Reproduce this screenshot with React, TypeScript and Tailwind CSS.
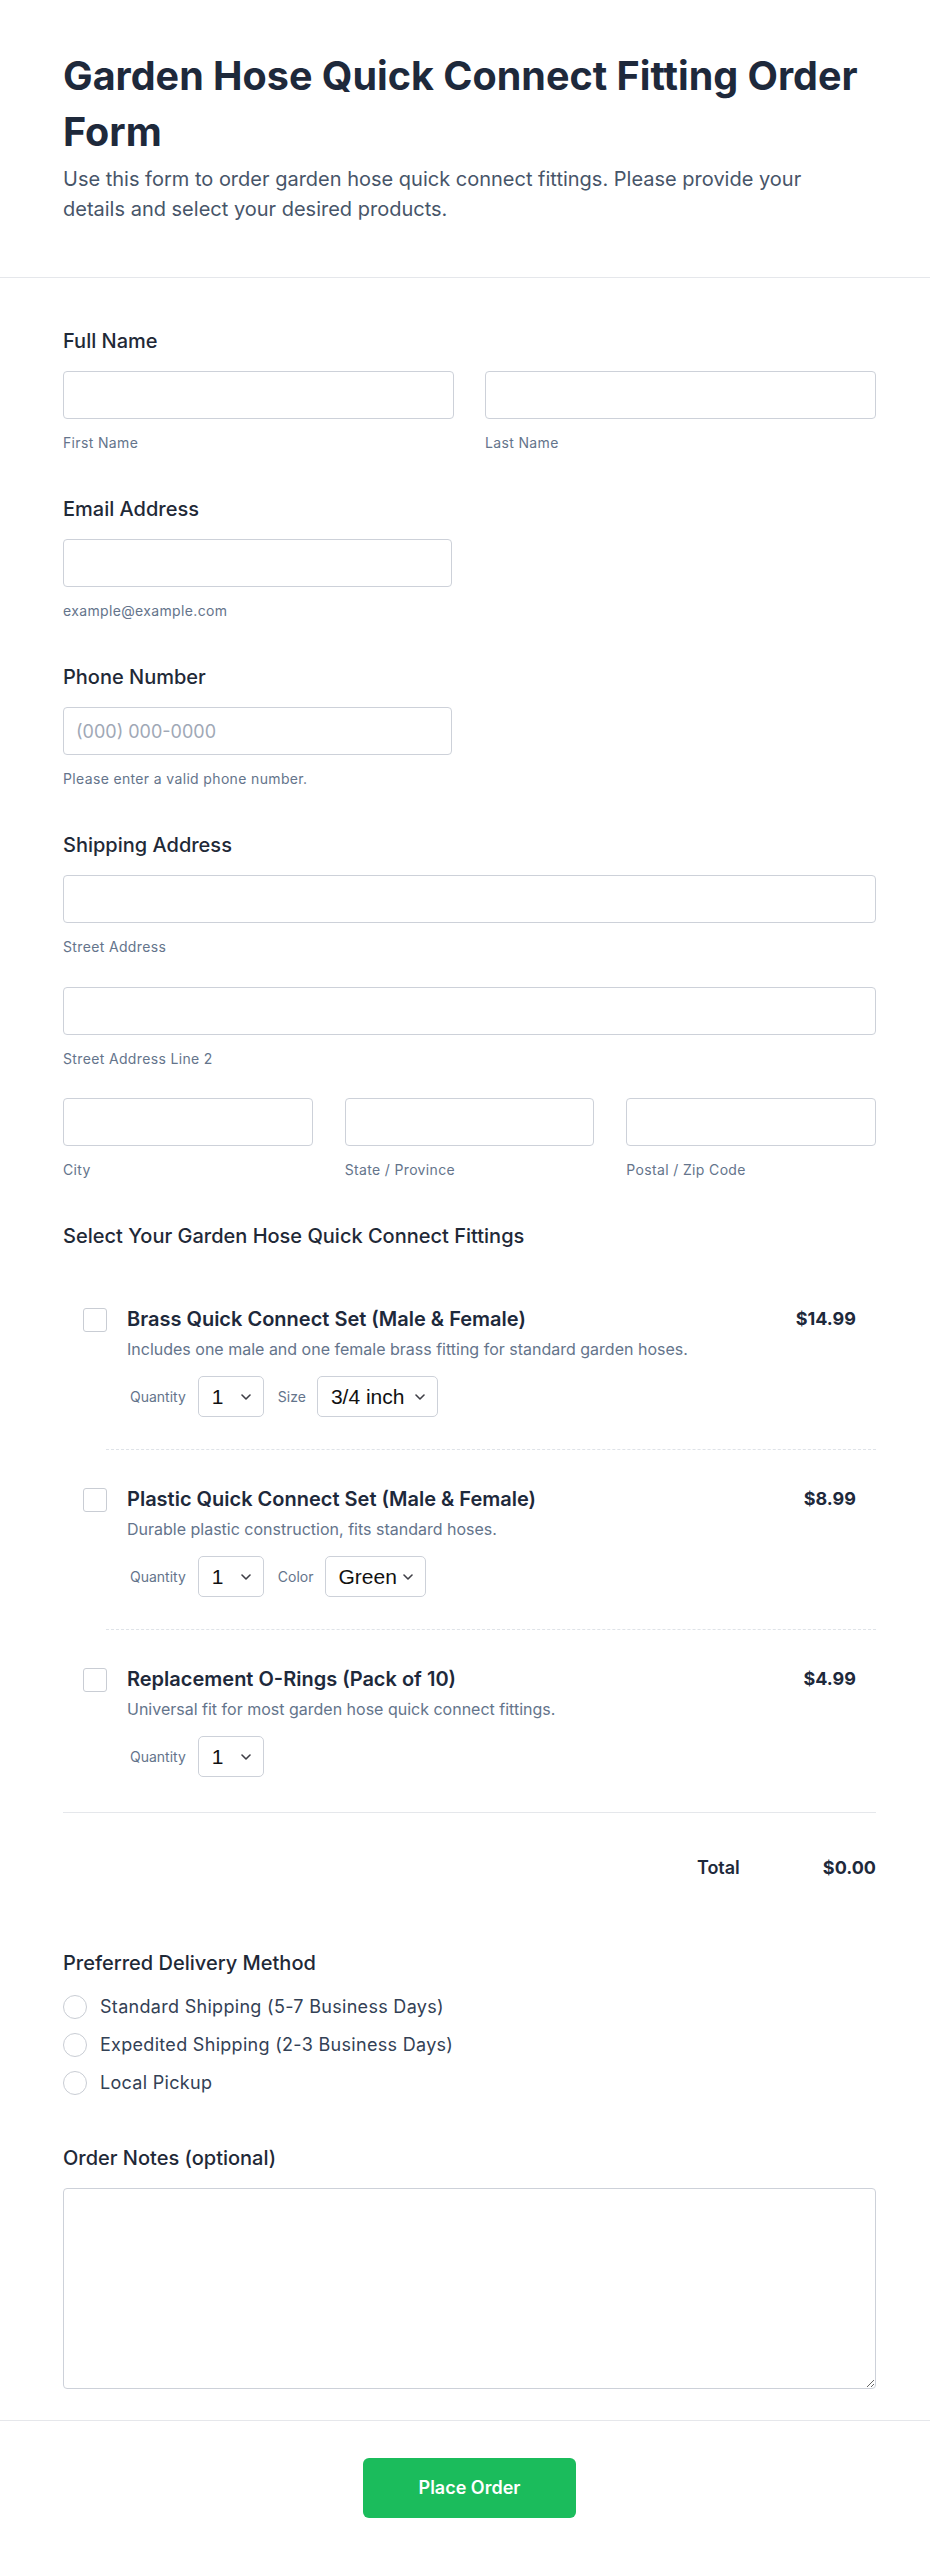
import React from 'react';

const inputCls = 'block h-12 w-full rounded border border-[#cdd1d9] bg-white px-3 text-lg text-[#1e293b] outline-none';

const Helper = ({ children }: { children: React.ReactNode }) => (
  <p className="mt-[14px] text-sm leading-5 tracking-wide text-[#64748b]">{children}</p>
);

const Label = ({ children }: { children: React.ReactNode }) => (
  <p className="mb-4 text-xl font-medium leading-7 text-[#1f2937]">{children}</p>
);

const Chevron = () => (
  <svg width="10" height="6" viewBox="0 0 10 6" fill="none" className="shrink-0">
    <path d="M1 1l4 4 4-4" stroke="#3f3f46" strokeWidth="1.6" strokeLinecap="round" strokeLinejoin="round" />
  </svg>
);

const FakeSelect = ({ value, width }: { value: string; width: string }) => (
  <div className={`flex h-[41px] items-center justify-between rounded-[5px] border border-[#cdd1d9] bg-white pl-[13px] pr-[12px] ${width}`}>
    <span className="font-['Liberation_Sans',Arial,sans-serif] text-[21px] leading-none text-[#111]">{value}</span>
    <Chevron />
  </div>
);

type Product = {
  name: string;
  desc: string;
  price: string;
  extra?: { label: string; value: string; width: string };
};

const products: Product[] = [
  {
    name: 'Brass Quick Connect Set (Male & Female)',
    desc: 'Includes one male and one female brass fitting for standard garden hoses.',
    price: '$14.99',
    extra: { label: 'Size', value: '3/4 inch', width: 'w-[121px]' },
  },
  {
    name: 'Plastic Quick Connect Set (Male & Female)',
    desc: 'Durable plastic construction, fits standard hoses.',
    price: '$8.99',
    extra: { label: 'Color', value: 'Green', width: 'w-[101px]' },
  },
  {
    name: 'Replacement O-Rings (Pack of 10)',
    desc: 'Universal fit for most garden hose quick connect fittings.',
    price: '$4.99',
  },
];

const ProductRow = ({ p, last }: { p: Product; last: boolean }) => (
  <>
    <div className={`flex items-start gap-5 px-5 pt-[35px] ${last ? 'pb-[35px]' : 'pb-[32px]'}`}>
      <span className="mt-[3px] block size-6 shrink-0 rounded-[3px] border border-[#c9cdd4] bg-white" />
      <div className="flex-1">
        <div className="flex items-start justify-between">
          <p className="text-xl font-semibold leading-7 text-[#1e293b]">{p.name}</p>
          <p className="text-lg font-bold leading-7 text-[#1e293b]">{p.price}</p>
        </div>
        <p className="mt-1 text-base leading-6 text-[#64748b]">{p.desc}</p>
        <div className="mt-[15px] flex items-center gap-[14px]">
          <div className="flex items-center gap-3">
            <span className="pl-[3px] text-sm text-[#64748b]">Quantity</span>
            <FakeSelect value="1" width="w-[66px]" />
          </div>
          {p.extra && (
            <div className="flex items-center gap-[11px]">
              <span className="text-sm text-[#64748b]">{p.extra.label}</span>
              <FakeSelect value={p.extra.value} width={p.extra.width} />
            </div>
          )}
        </div>
      </div>
    </div>
    {!last && <div className="ml-[43px] border-t border-dashed border-[#dfe3e8]" />}
  </>
);

const Radio = ({ label }: { label: string }) => (
  <label className="flex h-7 items-center gap-[13px]">
    <span className="block size-6 shrink-0 rounded-full border border-[#c9cdd4] bg-white" />
    <span className="text-lg leading-7 tracking-[0.3px] text-[#334155]">{label}</span>
  </label>
);

export default function App() {
  return (
    <div className="min-h-screen bg-white font-['Inter','Liberation_Sans',sans-serif]">
      <header className="border-b border-[#e5e7eb] pb-[53px] pl-[63px] pr-[54px] pt-12">
        <h1 className="text-[39.5px] font-bold leading-[56px] text-[#1e293b]">
          Garden Hose Quick Connect Fitting Order Form
        </h1>
        <p className="mt-1 max-w-3xl text-xl leading-[30px] text-[#475569]">
          Use this form to order garden hose quick connect fittings. Please provide your details and select your desired products.
        </p>
      </header>

      <main className="pb-[31px] pl-[63px] pr-[54px] pt-[49px]">
        <section>
          <Label>Full Name</Label>
          <div className="grid grid-cols-2 gap-[31px]">
            <div>
              <input className={inputCls} />
              <Helper>First Name</Helper>
            </div>
            <div>
              <input className={inputCls} />
              <Helper>Last Name</Helper>
            </div>
          </div>
        </section>

        <section className="mt-[42px]">
          <Label>Email Address</Label>
          <div className="w-[389px]">
            <input className={inputCls} />
          </div>
          <Helper>example@example.com</Helper>
        </section>

        <section className="mt-[42px]">
          <Label>Phone Number</Label>
          <div className="w-[389px]">
            <input className={`${inputCls} placeholder:text-[#a0a8b6]`} placeholder="(000) 000-0000" />
          </div>
          <Helper>Please enter a valid phone number.</Helper>
        </section>

        <section className="mt-[42px]">
          <Label>Shipping Address</Label>
          <input className={inputCls} />
          <Helper>Street Address</Helper>
          <div className="mt-[30px]">
            <input className={inputCls} />
            <Helper>Street Address Line 2</Helper>
          </div>
          <div className="mt-[29px] grid grid-cols-3 gap-8">
            <div>
              <input className={inputCls} />
              <Helper>City</Helper>
            </div>
            <div>
              <input className={inputCls} />
              <Helper>State / Province</Helper>
            </div>
            <div>
              <input className={inputCls} />
              <Helper>Postal / Zip Code</Helper>
            </div>
          </div>
        </section>

        <section className="mt-[42px]">
          <p className="text-xl font-medium leading-7 text-[#1f2937]">Select Your Garden Hose Quick Connect Fittings</p>
          <div className="mt-5">
            {products.map((p, i) => (
              <ProductRow key={p.name} p={p} last={i === products.length - 1} />
            ))}
          </div>
          <div className="border-t border-[#e5e7eb]" />
          <div className="flex items-center justify-end pt-[41px]">
            <span className="text-lg font-semibold leading-7 text-[#1e293b]">Total</span>
            <span className="ml-[83px] text-lg font-bold leading-7 text-[#1e293b]">$0.00</span>
          </div>
        </section>

        <section className="mt-[67px]">
          <p className="text-xl font-medium leading-7 text-[#1f2937]">Preferred Delivery Method</p>
          <div className="mt-4 flex flex-col gap-[10px]">
            <Radio label="Standard Shipping (5-7 Business Days)" />
            <Radio label="Expedited Shipping (2-3 Business Days)" />
            <Radio label="Local Pickup" />
          </div>
        </section>

        <section className="mt-[47px]">
          <Label>Order Notes (optional)</Label>
          <textarea className="block h-[201px] w-full rounded border border-[#cdd1d9] bg-white p-3 text-lg outline-none" />
        </section>
      </main>

      <footer className="flex justify-center border-t border-[#e5e7eb] pb-[50px] pl-[63px] pr-[54px] pt-[37px]">
        <button className="rounded-md bg-[#1bbc5c] px-14 py-4 text-lg font-semibold leading-7 text-white">
          Place Order
        </button>
      </footer>
    </div>
  );
}
